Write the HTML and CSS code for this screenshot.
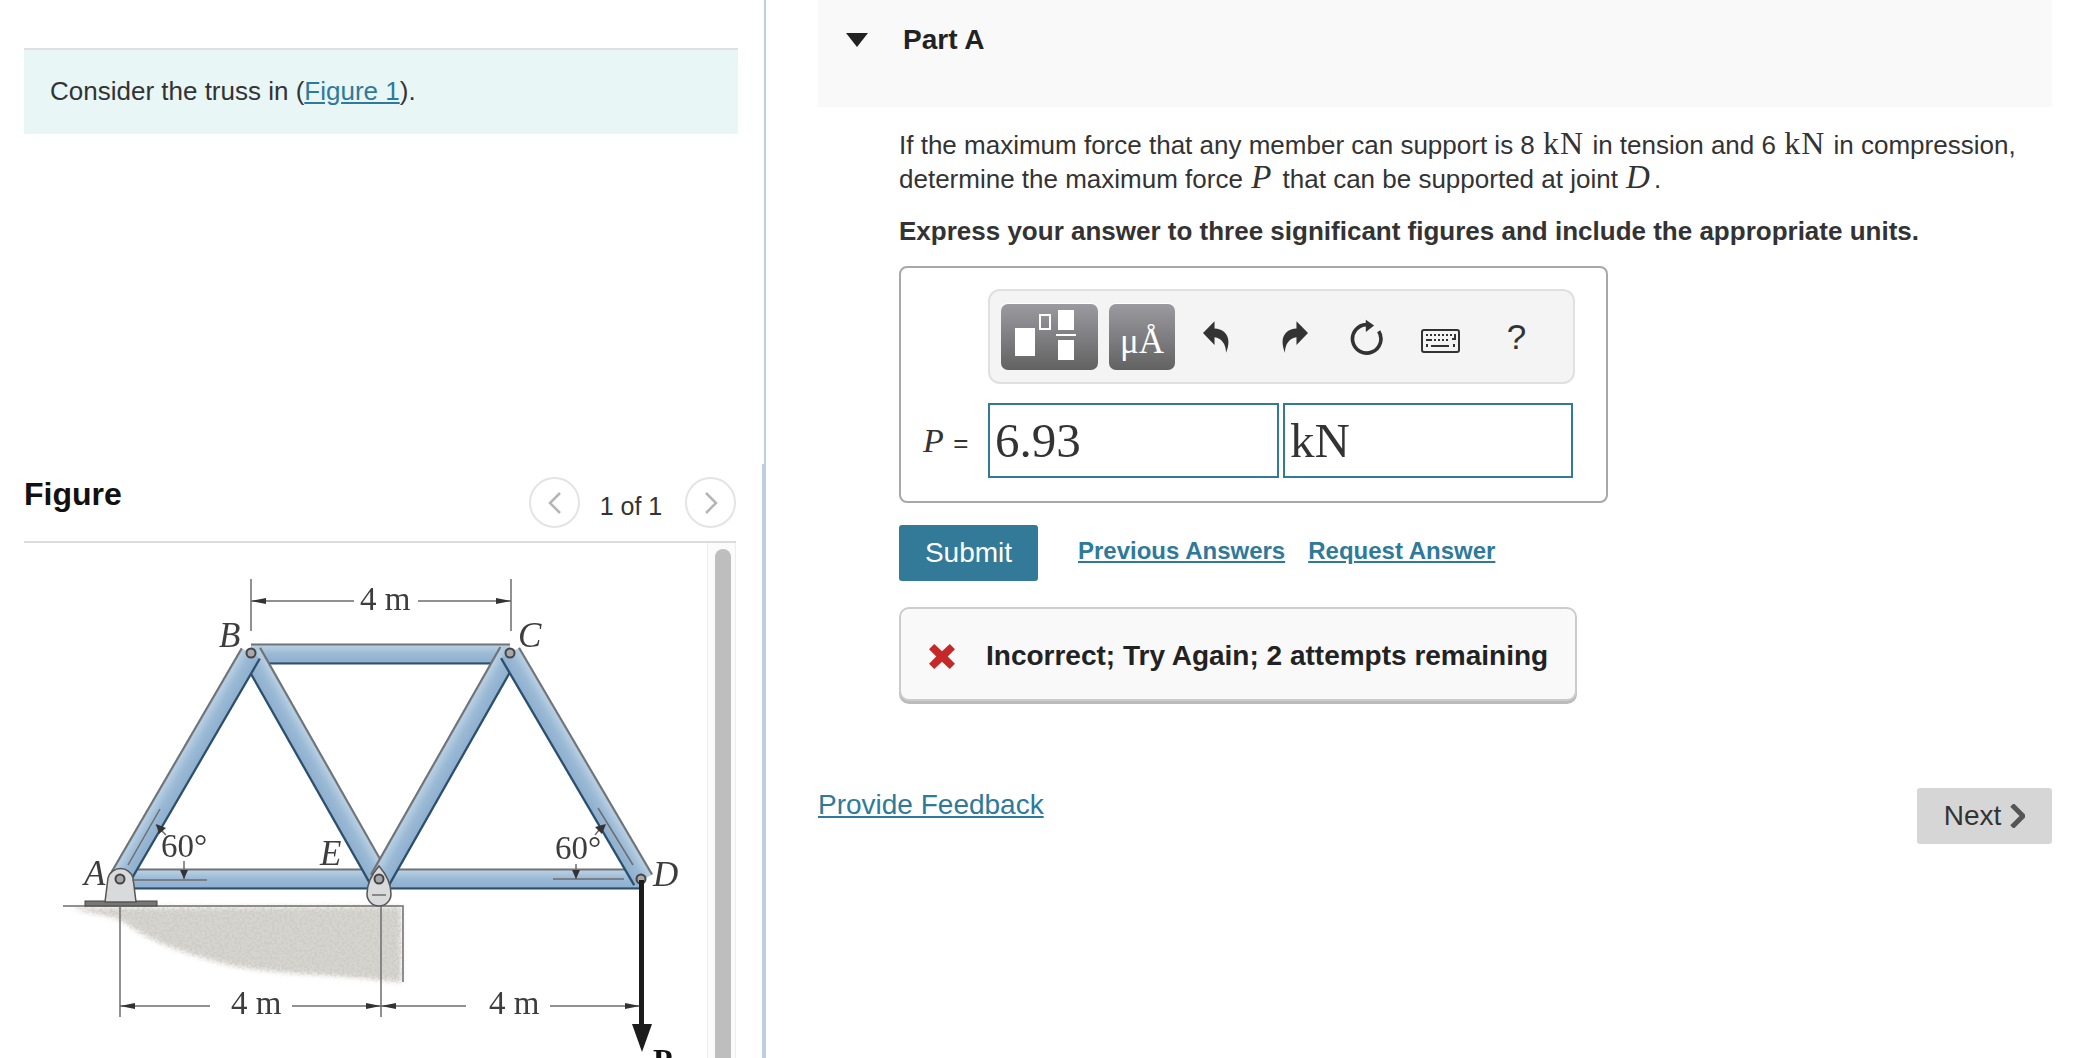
FILE: index.html
```html
<!DOCTYPE html>
<html>
  <head>
    <title>Part A - Truss</title>
    <link rel="stylesheet" href="styles.css">
  </head>
  <body>
    <div class="left">
      <div class="intro">Consider the truss in (<a href="#">Figure 1</a>).</div>
      <div class="figure-section">
        <div class="figure-head">
          <h2 class="figure-title">Figure</h2>
          <div class="pager">
            <span class="pager-btn">
              <svg width="14" height="24" viewBox="0 0 14 24"><path d="M12 2 2 12l10 10" /></svg>
            </span>
            <span class="pager-text">1 of 1</span>
            <span class="pager-btn">
              <svg width="14" height="24" viewBox="0 0 14 24"><path d="m2 2 10 10L2 22" /></svg>
            </span>
          </div>
        </div>
        <div class="figure-scroll">
          <svg class="truss" width="683" height="515" viewBox="24 543 683 515">
            <defs>
              <linearGradient id="bar" x1="0" y1="0" x2="0" y2="1">
                <stop offset="0" stop-color="#6a6d70" />
                <stop offset="0.07" stop-color="#74777a" />
                <stop offset="0.12" stop-color="#b7cfe3" />
                <stop offset="0.5" stop-color="#9ab9d5" />
                <stop offset="0.88" stop-color="#8fb0cf" />
                <stop offset="0.92" stop-color="#2c4f6c" />
                <stop offset="1" stop-color="#2c4f6c" />
              </linearGradient>
              <filter id="grain" x="-5%" y="-10%" width="110%" height="120%">
                <feGaussianBlur in="SourceGraphic" stdDeviation="2.500" result="soft" />
                <feTurbulence type="fractalNoise" baseFrequency="0.4" numOctaves="2" seed="4" />
                <feColorMatrix values="0 0 0 0 0.62  0 0 0 0 0.61  0 0 0 0 0.58  7 0 0 0 -3.200" result="dots" />
                <feComposite in="dots" in2="soft" operator="in" result="grainDots" />
                <feMerge>
                  <feMergeNode in="soft" />
                  <feMergeNode in="grainDots" />
                </feMerge>
              </filter>
            </defs>

            <!-- ground -->
            <path class="ground" d="M72 908C95 914 115 915 125 922 150 942 190 955 235 966 290 975 350 974 401 982V907Z" />
            <path class="dim" d="M63 906H403V982" />

            <!-- members -->
            <rect width="262" height="21" y="-10.500" fill="url(#bar)" transform="translate(380 879)" />
            <rect width="262" height="21" y="-10.500" fill="url(#bar)" transform="translate(119 879)" />
            <rect width="259" height="21" y="-10.500" fill="url(#bar)" transform="translate(251 654)" />
            <rect width="262" height="23" y="-11.500" fill="url(#bar)" transform="translate(251 653) rotate(60.4)" />
            <rect width="262" height="23" y="-11.500" fill="url(#bar)" transform="translate(380 880) rotate(-60.4)" />
            <rect width="262" height="23" y="-11.500" fill="url(#bar)" transform="translate(119 880) rotate(-59.8)" />
            <rect width="263" height="23" y="-11.500" fill="url(#bar)" transform="translate(510 653) rotate(59.6)" />

            <!-- supports -->
            <rect x="85" y="901" width="72" height="5" fill="#777" stroke="#444" />
            <path class="support" d="M105 902 108 878A13 13 0 0 1 133 878L136 902Z" />
            <path class="support" d="M379 866C386 874 391 884 391 894A12 12 0 0 1 367 894C367 884 372 874 379 866Z" />
            <path class="dim" d="M372 895H386" />

            <!-- pins -->
            <g class="pin">
              <circle cx="251" cy="653" r="4.500" />
              <circle cx="510" cy="653" r="4.500" />
              <circle cx="120" cy="879" r="4.500" />
              <circle cx="379" cy="879" r="4.500" />
              <circle cx="641" cy="879" r="4.500" />
            </g>

            <!-- dimensions -->
            <path class="dim" d="M251 579V631M511 579V631M251 601H354M418 601H511" />
            <path class="dim" d="M120 906V1017M381 906V1017M120 1006H210M292 1006H381H466M550 1006H640" />
            <path class="tick" d="M251 601 266 598V604ZM511 601 496 598V604ZM120 1006 135 1003V1009ZM381 1006 366 1003V1009ZM381 1006 396 1003V1009ZM640 1006 625 1003V1009Z" />

            <!-- angle marks -->
            <path class="dim" d="M128 865 160 809M132 880H207M184 861V879M156 825 166 835M553 879H624M576 864V879M598 808 633 865M603 825 595 835" />
            <path class="tick" d="M184 879 180 870H188ZM576 879 572 870H580ZM156 824 166 828 159 834ZM606 824 595 827 602 834Z" />

            <!-- load -->
            <rect x="639" y="880" width="5" height="146" fill="#1c1c1c" />
            <path d="M632 1024H652L642 1052Z" fill="#1c1c1c" />

            <!-- labels -->
            <text class="label" x="219" y="647">B</text>
            <text class="label" x="518" y="647">C</text>
            <text class="label" x="84" y="885">A</text>
            <text class="label" x="320" y="865">E</text>
            <text class="label" x="653" y="886">D</text>
            <text class="value" x="161" y="857">60°</text>
            <text class="value" x="555" y="859">60°</text>
            <text class="value" x="360" y="610">4 m</text>
            <text class="value" x="231" y="1014">4 m</text>
            <text class="value" x="489" y="1014">4 m</text>
            <text class="load" x="653" y="1071">P</text>
          </svg>
          <div class="scroll-track"><div class="scroll-thumb"></div></div>
        </div>
      </div>
    </div>

    <div class="right">
      <div class="part-bar">
        <span class="part-arrow"></span>
        <span class="part-title">Part A</span>
      </div>

      <div class="part-body">
        <p class="question">
          If the maximum force that any member can support is 8 <span class="math">kN</span> in tension and 6 <span class="math">kN</span> in compression,<br>
          determine the maximum force <i class="math-var">P</i> that can be supported at joint <i class="math-var">D</i>.
        </p>
        <p class="instruction">Express your answer to three significant figures and include the appropriate units.</p>

        <div class="answer-box">
          <div class="toolbar">
            <span class="tool-btn tool-btn-wide">
              <svg width="97" height="66" viewBox="0 0 97 66">
                <rect x="14" y="24" width="20" height="28" fill="#fff" />
                <rect x="39" y="11" width="10" height="14" fill="none" stroke="#fff" stroke-width="2" />
                <rect x="57" y="6" width="16" height="20" fill="#fff" />
                <rect x="55" y="30" width="20" height="2" fill="#fff" />
                <rect x="57" y="36" width="16" height="20" fill="#fff" />
              </svg>
            </span>
            <span class="tool-btn tool-btn-unit">μÅ</span>
            <span class="tool-icon">
              <svg width="28" height="32" viewBox="40 60 85 95"><path d="M40 95 75 60V82C105 84 130 105 110 155 110 128 95 110 75 108V132Z" /></svg>
            </span>
            <span class="tool-icon">
              <svg class="redo" width="28" height="32" viewBox="40 60 85 95"><path transform="matrix(-1 0 0 1 165 0)" d="M40 95 75 60V82C105 84 130 105 110 155 110 128 95 110 75 108V132Z" /></svg>
            </span>
            <span class="tool-icon">
              <svg width="37" height="38" viewBox="475 50 110 115">
                <path class="ring" d="M530 70A43 43 0 1 0 567 90" />
                <path d="M528 55 553 73 528 92Z" />
              </svg>
            </span>
            <span class="tool-icon">
              <svg class="keyboard" width="39" height="24" viewBox="0 0 39 24">
                <rect x="1" y="1" width="37" height="22" rx="2" fill="none" stroke="#333" stroke-width="2" />
                <path d="M5 5h2v2H5zM9 5h2v2H9zM13 5h2v2h-2zM17 5h2v2h-2zM21 5h2v2h-2zM25 5h2v2h-2zM29 5h2v2h-2zM33 5h2v6h-4V9h2zM5 10h6v2H5zM13 10h2v2h-2zM17 10h2v2h-2zM21 10h2v2h-2zM25 10h2v2h-2zM5 15h2v3H5zM10 16h18v2H10zM32 15h2v3h-2z" />
              </svg>
            </span>
            <span class="tool-icon tool-help">?</span>
          </div>
          <div class="answer-row">
            <span class="answer-label"><i>P</i> <span class="answer-eq">=</span></span>
            <span class="answer-input">6.93</span>
            <span class="answer-input answer-unit">kN</span>
          </div>
        </div>

        <div class="actions">
          <button class="submit">Submit</button>
          <a class="action-link" href="#">Previous Answers</a>
          <a class="action-link" href="#">Request Answer</a>
        </div>

        <div class="feedback">
          <svg class="feedback-x" width="28" height="27" viewBox="0 0 27 26">
            <path d="M1 6 6 1 13.500 8 21 1 26 6 19 13 26 20 21 25 13.500 18 6 25 1 20 8 13Z" />
          </svg>
          <span>Incorrect; Try Again; 2 attempts remaining</span>
        </div>
      </div>

      <div class="footer">
        <a class="feedback-link" href="#">Provide Feedback</a>
        <button class="next">Next
          <svg width="16" height="24" viewBox="0 0 16 24"><path d="M3 1 14 12 3 23" /></svg>
        </button>
      </div>
    </div>
  </body>
</html>
```

FILE: styles.css
```css
* {
  box-sizing: border-box;
}

body {
  display: flex;
  height: 100vh;
  margin: 0;
  overflow: hidden;
  background-color: #fff;
  color: #333;
  font-family: "Liberation Sans", Arial, sans-serif;
  font-size: 26px;
}

a {
  color: #2f7a9b;
}

.left {
  flex: none;
  width: 766px;
  height: 100%;
  padding-top: 48px;
  border-right: 2px solid #bfcfdf;
}

.intro {
  display: flex;
  align-items: center;
  width: 714px;
  height: 86px;
  margin-left: 24px;
  padding: 0 0 2px 26px;
  border-top: 2px solid #e0e0e0;
  background-color: #e8f6f6;
  white-space: pre;
}

.figure-section {
  height: 594px;
  margin-top: 330px;
  padding: 0 26px 0 24px;
  border-right: 2px solid #bfcfdf;
}

.figure-head {
  display: flex;
  justify-content: space-between;
  align-items: flex-start;
  height: 79px;
  padding-top: 12px;
  border-bottom: 2px solid #dcdcdc;
}

.figure-title {
  margin: 0;
  color: #111;
  font-size: 32px;
  line-height: 36px;
}

.pager {
  display: flex;
  align-items: flex-start;
  padding-top: 1px;
}

.pager-btn {
  display: flex;
  justify-content: center;
  align-items: center;
  width: 51px;
  height: 51px;
  border: 2px solid #e4e4e4;
  border-radius: 50%;
}

.pager-btn path {
  fill: none;
  stroke: #b5b5b5;
  stroke-width: 2.500;
}

.pager-text {
  width: 105px;
  padding: 13px 3px 0 0;
  font-size: 25px;
  line-height: 32px;
  text-align: center;
}

.figure-scroll {
  display: flex;
  height: 515px;
  overflow: hidden;
}

.truss {
  flex: none;
  filter: blur(0.5px);
}

.truss .ground {
  fill: #d6d4ce;
  filter: url(#grain);
}

.truss .dim {
  fill: none;
  stroke: #6e6e6e;
  stroke-width: 1.500;
}

.truss .tick {
  fill: #333;
}

.truss .support {
  fill: #d9dadb;
  stroke: #555;
  stroke-width: 1.500;
}

.truss .pin {
  fill: #a8a8a8;
  stroke: #444;
  stroke-width: 2;
}

.truss text {
  fill: #3d3d3d;
  font-family: "Liberation Serif", "Times New Roman", serif;
}

.truss .label {
  font-size: 35px;
  font-style: italic;
}

.truss .value {
  font-size: 33px;
}

.truss .load {
  fill: #111;
  font-size: 32px;
  font-weight: bold;
}

.scroll-track {
  flex: none;
  width: 29px;
  padding: 6px 5px 0 7px;
  border-right: 1px solid #eee;
  border-left: 1px solid #eee;
  background-color: #fbfbfb;
}

.scroll-thumb {
  width: 16px;
  height: 100%;
  border-radius: 8px 8px 0 0;
  background-color: #bebebe;
}

.right {
  flex: 1;
  padding: 0 30px 0 52px;
}

.part-bar {
  display: flex;
  align-items: flex-start;
  height: 107px;
  padding: 22px 0 0 28px;
  background-color: #f9f9f9;
}

.part-arrow {
  width: 0;
  height: 0;
  margin-top: 11px;
  border-top: 14px solid #222;
  border-right: 11px solid transparent;
  border-left: 11px solid transparent;
}

.part-title {
  margin-left: 35px;
  color: #222;
  font-size: 28px;
  font-weight: bold;
  line-height: 36px;
}

.part-body {
  padding-left: 81px;
}

.question {
  margin: 21px 0 0;
  line-height: 34px;
  white-space: nowrap;
}

.math {
  margin: 0 1px;
  font-family: "Liberation Serif", "Times New Roman", serif;
  font-size: 32px;
  letter-spacing: 1px;
  line-height: 0;
}

.math-var {
  margin: 0 4px 0 1px;
  font-family: "Liberation Serif", "Times New Roman", serif;
  font-size: 33px;
  line-height: 0;
}

.instruction {
  margin: 18px 0 0;
  font-weight: bold;
  line-height: 34px;
  white-space: nowrap;
}

.answer-box {
  width: 709px;
  height: 237px;
  margin-top: 18px;
  padding: 21px 0 0 87px;
  border: 2px solid #a8a8a8;
  border-radius: 8px;
}

.toolbar {
  display: flex;
  align-items: center;
  width: 587px;
  height: 95px;
  padding-left: 11px;
  border: 2px solid #e0e0e0;
  border-radius: 12px;
  background-color: #f4f4f4;
}

.tool-btn {
  display: flex;
  flex: none;
  justify-content: center;
  align-items: center;
  height: 66px;
  border-radius: 7px;
  background: linear-gradient(#9b9aa0, #626262);
  box-shadow: 0 -1px 0 #fff;
  color: #fff;
}

.tool-btn-wide {
  width: 97px;
  margin-right: 11px;
}

.tool-btn-unit {
  width: 66px;
  margin-right: 4px;
  padding-top: 10px;
  font-family: "Liberation Serif", "Times New Roman", serif;
  font-size: 35px;
}

.tool-icon {
  display: flex;
  flex: none;
  justify-content: center;
  align-items: center;
  width: 75px;
  height: 40px;
}

.tool-icon path {
  fill: #333;
}

.tool-icon .ring {
  fill: none;
  stroke: #333;
  stroke-width: 11;
}

.tool-icon .redo {
  margin-left: 4px;
}

.tool-icon .keyboard {
  margin: 8px 0 0 -2px;
}

.tool-help {
  font-size: 35px;
}

.answer-row {
  display: flex;
  align-items: center;
  width: 709px;
  height: 75px;
  margin: 19px 0 0 -87px;
  padding-left: 22px;
}

.answer-label {
  width: 65px;
  font-family: "Liberation Serif", "Times New Roman", serif;
  font-size: 34px;
  white-space: nowrap;
}

.answer-eq {
  margin-left: 1px;
  font-family: "Liberation Sans", Arial, sans-serif;
  font-size: 26px;
}

.answer-input {
  display: flex;
  align-items: center;
  width: 291px;
  height: 75px;
  padding-left: 5px;
  border: 2px solid #337a99;
  font-family: "Liberation Serif", "Times New Roman", serif;
  font-size: 49px;
}

.answer-unit {
  width: 290px;
  margin-left: 4px;
}

.actions {
  display: flex;
  align-items: center;
  margin-top: 22px;
}

.submit {
  width: 139px;
  height: 56px;
  margin-right: 40px;
  padding: 0;
  border: none;
  border-radius: 3px;
  background-color: #337a99;
  color: #fff;
  font-family: inherit;
  font-size: 28px;
}

.action-link {
  margin-right: 23px;
  padding-bottom: 4px;
  font-size: 24px;
  font-weight: bold;
}

.feedback {
  display: flex;
  align-items: center;
  width: 678px;
  height: 94px;
  margin-top: 26px;
  padding: 4px 0 0 27px;
  border: 2px solid #ccc;
  border-radius: 10px;
  background-color: #f9f9f9;
  box-shadow: 0 3px 0 #bbb;
  color: #222;
  font-size: 28px;
  font-weight: bold;
  white-space: nowrap;
}

.feedback-x {
  flex: none;
  margin-right: 30px;
}

.feedback-x path {
  fill: #c62828;
}

.footer {
  display: flex;
  justify-content: space-between;
  align-items: flex-start;
  margin-top: 87px;
}

.feedback-link {
  padding-top: 1px;
  font-size: 28px;
  line-height: 32px;
}

.next {
  display: flex;
  justify-content: center;
  align-items: center;
  gap: 8px;
  width: 135px;
  height: 56px;
  padding: 0;
  border: none;
  border-radius: 3px;
  background-color: #d6d6d6;
  color: #333;
  font-family: inherit;
  font-size: 28px;
}

.next path {
  fill: none;
  stroke: #555;
  stroke-width: 5;
}
```
